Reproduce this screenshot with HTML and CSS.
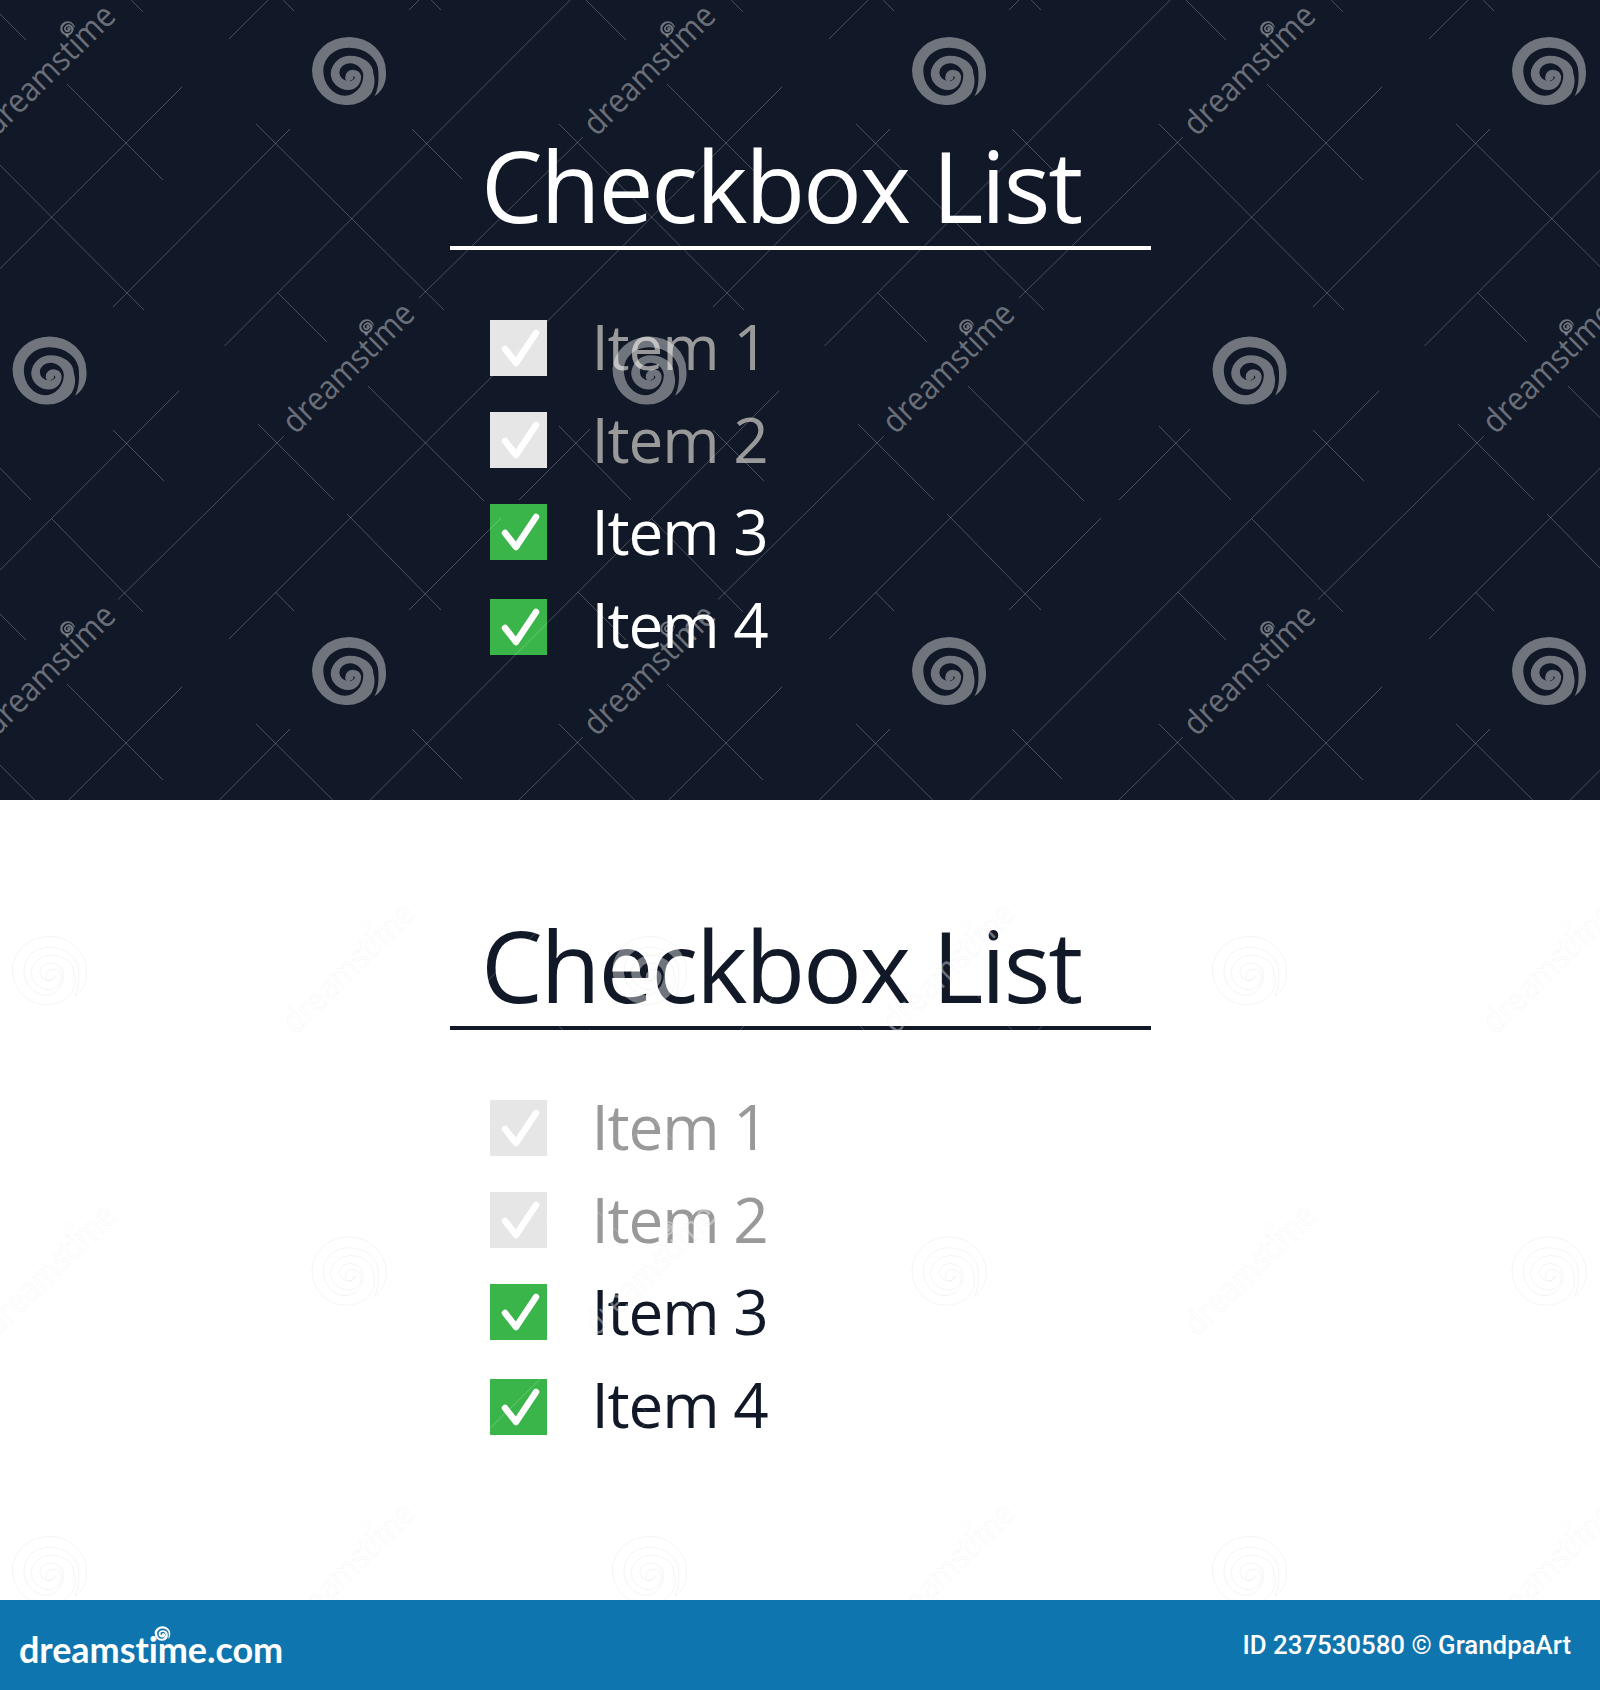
FILE: index.html
```html
<!DOCTYPE html>
<html lang="en">
<head>
<meta charset="utf-8">
<title>Checkbox List</title>
<link rel="stylesheet" href="styles.css">
</head>
<body>
<div class="sheet">
  <section class="panel panel-dark">
    <h1 class="title">Checkbox List</h1>
    <ul class="list">
      <li class="item item-off"><svg class="box" viewBox="0 0 57 56"><path class="tick" d="M15 29 L26 43 L46 13"/></svg><span class="label">Item 1</span></li>
      <li class="item item-off"><svg class="box" viewBox="0 0 57 56"><path class="tick" d="M15 29 L26 43 L46 13"/></svg><span class="label">Item 2</span></li>
      <li class="item item-on"><svg class="box" viewBox="0 0 57 56"><path class="tick" d="M15 29 L26 43 L46 13"/></svg><span class="label">Item 3</span></li>
      <li class="item item-on"><svg class="box" viewBox="0 0 57 56"><path class="tick" d="M15 29 L26 43 L46 13"/></svg><span class="label">Item 4</span></li>
    </ul>
  </section>
  <section class="panel panel-light">
    <h1 class="title">Checkbox List</h1>
    <ul class="list">
      <li class="item item-off"><svg class="box" viewBox="0 0 57 56"><path class="tick" d="M15 29 L26 43 L46 13"/></svg><span class="label">Item 1</span></li>
      <li class="item item-off"><svg class="box" viewBox="0 0 57 56"><path class="tick" d="M15 29 L26 43 L46 13"/></svg><span class="label">Item 2</span></li>
      <li class="item item-on"><svg class="box" viewBox="0 0 57 56"><path class="tick" d="M15 29 L26 43 L46 13"/></svg><span class="label">Item 3</span></li>
      <li class="item item-on"><svg class="box" viewBox="0 0 57 56"><path class="tick" d="M15 29 L26 43 L46 13"/></svg><span class="label">Item 4</span></li>
    </ul>
  </section>

  <svg class="watermark" viewBox="0 0 1600 1600" width="1600" height="1600">
    <defs>
      <g id="spiral" transform="scale(.3333) translate(-147 -138)">
        <path class="spiral-shape" d="M224 214 A85 85 0 0 0 258 140 A110 104 0 0 0 147 36 A111 100 0 0 0 36 135 A100 105 0 0 0 135 240 A90 90 0 0 0 214 205 A75 75 0 0 0 220 145 A70 53 0 0 0 150 92 A58 58 0 0 0 92 145 A55 50 0 0 0 145 195 A38 38 0 0 0 183 152 A25 22 0 0 0 158 134 A22 22 0 0 0 136 155 A10 10 0 0 0 152 166 A10 10 0 0 0 160 152 A14 14 0 0 1 165 158 A22 22 0 0 1 145 168 A27 27 0 0 1 118 143 A32 28 0 0 1 150 115 A42 40 0 0 1 190 150 A55 62 0 0 1 135 212 A65 75 0 0 1 70 135 A75 68 0 0 1 147 68 A88 72 0 0 1 235 140 A60 100 0 0 1 224 214 Z"/>
      </g>
      <g id="word">
        <text class="wm-text" text-anchor="middle" y="10" textLength="170" lengthAdjust="spacingAndGlyphs">dreamstime</text>
        <use href="#spiral" transform="translate(42 -18) scale(.2)"/>
      </g>
      <g id="tile">
        <g class="wm-lines">
          <path d="M229 639 L782 87"/>
          <path d="M224.500 346 L779 -209"/>
          <path d="M718 599.500 L884 436"/>
          <path d="M713 307 L890 129"/>
          <path d="M419 298 L583 137"/>
          <path d="M519 500 L590 429"/>
          <path d="M409 610 L501 518"/>
          <path d="M578 592 L626 640"/>
          <path d="M667 84 L763 180"/>
          <path d="M559 124 L744 310"/>
          <path d="M256 124 L444 310"/>
          <path d="M412 129 L462 179"/>
          <path d="M278 293 L327 342"/>
          <path d="M368 386 L484 501"/>
          <path d="M258 424 L334 500"/>
          <path d="M559 426 L631 500"/>
          <path d="M713 430 L764 481"/>
          <path d="M347 514 L441 610"/>
          <path d="M275.500 592 L294 611"/>
          <path d="M652 519 L743 612"/>
        </g>
        <use href="#spiral" transform="translate(349 71)"/>
        <use href="#spiral" transform="translate(649.500 370.500)"/>
        <use href="#word" transform="translate(650 70.500) rotate(-44.500)"/>
        <use href="#word" transform="translate(349 368.500) rotate(-44.500)"/>
      </g>
    </defs>
    <use href="#tile" x="-600" y="-600"/><use href="#tile" x="0" y="-600"/><use href="#tile" x="600" y="-600"/><use href="#tile" x="1200" y="-600"/>
    <use href="#tile" x="-600" y="0"/><use href="#tile" x="0" y="0"/><use href="#tile" x="600" y="0"/><use href="#tile" x="1200" y="0"/>
    <use href="#tile" x="-600" y="600"/><use href="#tile" x="0" y="600"/><use href="#tile" x="600" y="600"/><use href="#tile" x="1200" y="600"/>
    <use href="#tile" x="-600" y="1200"/><use href="#tile" x="0" y="1200"/><use href="#tile" x="600" y="1200"/><use href="#tile" x="1200" y="1200"/>
  </svg>
</div>
<footer class="footer">
  <div class="brand">
    <span class="brand-name">dreamstime.com</span>
    <svg class="brand-mark" viewBox="-40 -38 80 76"><use href="#spiral"/></svg>
  </div>
  <div class="credit">ID 237530580 © GrandpaArt</div>
</footer>
</body>
</html>
```
FILE: styles.css
```css
* { box-sizing: border-box; }
html, body { margin: 0; padding: 0; }
body { width: 1600px; height: 1690px; overflow: hidden; font-family: "Open Sans", sans-serif; background: #fff; }

.sheet { position: relative; width: 1600px; height: 1600px; }

.panel { height: 800px; padding-left: 450px; }
.panel-dark { background: #111827; color: #fff; padding-top: 130px; }
.panel-light { background: #fff; color: #111827; padding-top: 110px; }

.title {
  width: 701px;
  margin: 0;
  padding: 0 0 0 31px;
  height: 119.5px;
  font-size: 98px;
  line-height: 110px;
  font-weight: 400;
  letter-spacing: -2.2px;
  white-space: nowrap;
  border-bottom: 4px solid currentColor;
}

.list { list-style: none; margin: 70px 0 0 39.5px; padding: 0; display: flex; flex-direction: column; gap: 36px; }
.item { display: flex; align-items: center; height: 56px; font-size: 62px; letter-spacing: -1.2px; gap: 45px; white-space: nowrap; }
.item:last-child { margin-top: 3px; }
.label { line-height: 56px; margin-bottom: 1px; }
.item:first-child .label { margin-bottom: 4px; }
.item:last-child .label { margin-bottom: 5px; }
.box { width: 57px; height: 56px; flex: none; }
.item-off .box { background: #e6e6e6; }
.item-on .box { background: #39b54a; }
.item-off { color: #999; }

.tick { fill: none; stroke: #fff; stroke-width: 6.5; stroke-linecap: round; stroke-linejoin: round; }

.watermark { position: absolute; left: 0; top: 0; pointer-events: none; fill: rgba(255,255,255,.4); }
.spiral-shape { stroke: rgba(0,0,0,.06); stroke-width: 3px; paint-order: stroke; }
.wm-text { stroke: rgba(0,0,0,.05); stroke-width: 1px; paint-order: stroke; font-family: "Open Sans", sans-serif; font-size: 33px; font-weight: 400; }
.wm-lines path { fill: none; stroke: rgba(255,255,255,.24); stroke-width: 1px; }

.footer { display: flex; justify-content: space-between; align-items: center; height: 90px; padding: 0 29px 0 19px; background: #0f75ae; color: #fff; }
.brand { position: relative; }
.brand-name { display: block; font-family: "Lato", sans-serif; font-size: 36px; font-weight: 700; line-height: 50px; letter-spacing: -.07px; padding-top: 8px; }
.brand-mark { position: absolute; left: 135px; top: 9px; width: 17px; height: 17px; fill: #fff; }
.credit { font-family: "Roboto", sans-serif; font-size: 25.8px; font-weight: 500; }
```
